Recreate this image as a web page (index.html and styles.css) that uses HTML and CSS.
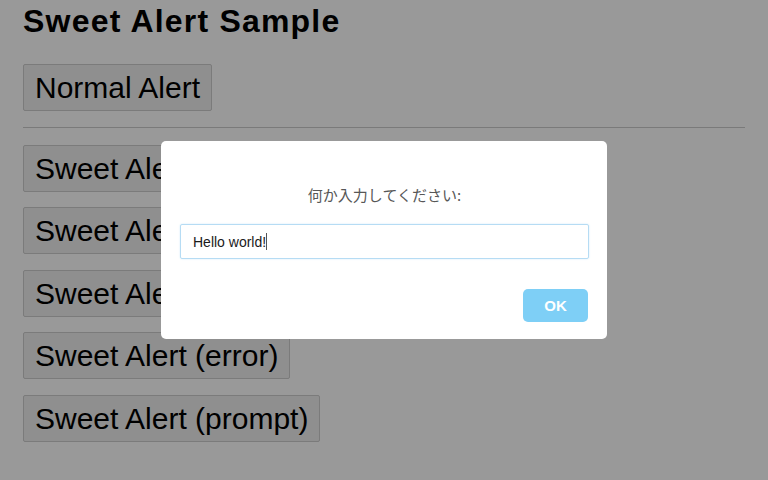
FILE: index.html
```html
<!DOCTYPE html>
<html lang="ja">
<head>
<meta charset="utf-8">
<title>Sweet Alert Sample</title>
<link rel="stylesheet" href="styles.css">
</head>
<body>
<main class="page">
  <h1 class="title">Sweet Alert Sample</h1>
  <div class="row"><button class="btn">Normal Alert</button></div>
  <hr class="divider">
  <div class="row"><button class="btn">Sweet Alert</button></div>
  <div class="row"><button class="btn">Sweet Alert (success)</button></div>
  <div class="row"><button class="btn">Sweet Alert (warning)</button></div>
  <div class="row"><button class="btn">Sweet Alert (error)</button></div>
  <div class="row"><button class="btn">Sweet Alert (prompt)</button></div>
</main>
<div class="modal">
  <p class="modal-text">何か入力してください:</p>
  <div class="field"><span class="field-value">Hello world!</span><span class="caret"></span></div>
  <div class="actions"><button class="ok">OK</button></div>
</div>
</body>
</html>
```

FILE: styles.css
```css
html, body {
  margin: 0;
  padding: 0;
  background: #999999;
  height: 100%;
  overflow: hidden;
}
.page {
  padding: 0 23px;
  font-family: "Liberation Sans", Arial, sans-serif;
  color: #000;
}
.title {
  margin: 0;
  padding-top: 3px;
  font-size: 32px;
  line-height: 36px;
  font-weight: bold;
  letter-spacing: 1.2px;
  height: 61px;
}
.row {
  margin-bottom: 15.5px;
}
.btn {
  font-family: "Liberation Sans", Arial, sans-serif;
  font-size: 30px;
  line-height: 33px;
  height: 47px;
  padding: 0 11px;
  background: #8f8f8f;
  border: 1px solid #7b7b7b;
  border-radius: 2px;
  color: #000;
  margin: 0;
}
.divider {
  border: 0;
  border-top: 1px solid #7a7a7a;
  margin: 0 0 17px;
}
.modal {
  position: absolute;
  left: 161px;
  top: 141px;
  width: 446px;
  box-sizing: border-box;
  height: 198px;
  background: #fff;
  border-radius: 5px;
  padding: 43px 18px 17px 19px;
  font-family: "Liberation Sans", Arial, "Noto Sans CJK JP", sans-serif;
}
.modal-text {
  margin: 0;
  text-align: center;
  font-size: 15px;
  line-height: 22px;
  color: #575757;
  font-family: "Noto Sans CJK JP", sans-serif;
}
.field {
  margin-top: 18px;
  height: 35px;
  box-sizing: border-box;
  border: 1px solid #b6dcf4;
  box-shadow: 0 0 2px #cfe9fa;
  border-radius: 2px;
  padding: 0 12px;
  display: flex;
  align-items: center;
  font-size: 14px;
  color: #1a1a1a;
}
.caret {
  display: inline-block;
  width: 1px;
  height: 17px;
  background: #555;
}
.actions {
  display: flex;
  justify-content: flex-end;
  margin-top: 30px;
  padding-right: 1px;
}
.ok {
  width: 65px;
  height: 33px;
  border: 0;
  border-radius: 5px;
  background: #7ecff6;
  color: #fff;
  font-family: "Liberation Sans", Arial, sans-serif;
  font-weight: bold;
  font-size: 15px;
  padding: 0;
}
```
